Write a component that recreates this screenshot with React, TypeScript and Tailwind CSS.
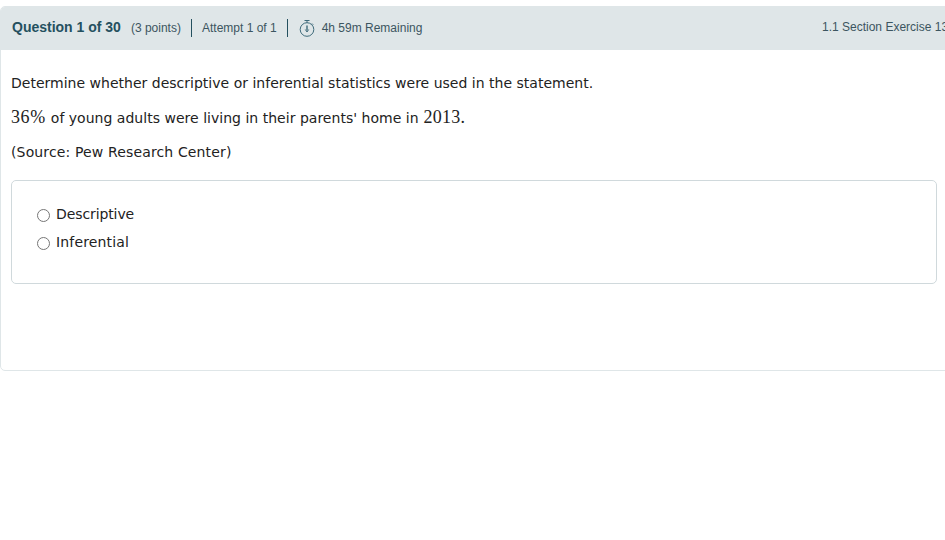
export default function App() {
  return (
    <div className="bg-white w-[945px] h-[540px] overflow-hidden pt-[6px]">
      <div className="w-[960px] h-[365px] border border-[#dfe6e8] rounded-[5px] overflow-hidden">
        <div className="h-[44px] -mt-px -mx-px bg-[#dfe6e8] flex items-center justify-between pl-[12px] text-[#2a4652] font-['Liberation_Sans',sans-serif]">
          <div className="flex items-center">
            <span className="text-[14px] font-bold text-[#24505f] -mt-[2px]">Question 1 of 30</span>
            <span className="text-[12px] ml-[10px] text-[#3c5560]">(3 points)</span>
            <span className="w-px h-[18px] bg-[#24505f] ml-[10px]"></span>
            <span className="text-[12px] ml-[10px] text-[#3c5560]">Attempt 1 of 1</span>
            <span className="w-px h-[18px] bg-[#24505f] ml-[10px]"></span>
            <svg className="ml-[11px] text-[#3e6a7a]" width="16" height="18" viewBox="0 0 16 18" fill="none" stroke="currentColor" strokeWidth="1">
              <circle cx="8" cy="10.5" r="6.8" />
              <path d="M5.5 1.5h5M8 1.5V3.7M13 4.5l1.2 1.2" />
              <path d="M8 6.5v5" strokeWidth="1.4" />
              <path d="M6.3 10.5 8 13l1.7-2.5" />
            </svg>
            <span className="text-[12px] ml-[7px] text-[#3c5560]">4h 59m Remaining</span>
          </div>
          <span className="text-[12px] whitespace-nowrap w-[138px] text-[#3c5560] -mt-[2px]">1.1 Section Exercise 13</span>
        </div>
        <div className="pl-[10px] pr-[22px] text-[#222] text-[14px] font-['DejaVu_Sans',sans-serif]">
          <p className="mt-[24px] leading-[18px] tracking-[0.01px]">Determine whether descriptive or inferential statistics were used in the statement.</p>
          <div className="mt-[16px] h-[18px] leading-[18px] flex items-baseline gap-[5px] whitespace-pre">
            <div className="font-['Liberation_Serif',serif] text-[18px] tracking-[0.6px]">36%</div>
            <div className="tracking-[0.02px]">of young adults were living in their parents&#39; home in</div>
            <div className="font-['Liberation_Serif',serif] text-[18px] tracking-[0.2px]">2013.</div>
          </div>
          <p className="mt-[17px] leading-[18px] tracking-[0.14px]">(Source: Pew Research Center)</p>
          <div className="mt-[19px] h-[104px] border border-[#d0d9dc] rounded-[5px] pl-[25px] pt-[24px]">
            <label className="flex items-center h-[18px]">
              <span className="w-[13px] h-[13px] rounded-full border border-[#767676] bg-white mt-[2px]"></span>
              <span className="ml-[6px] tracking-[-0.1px]">Descriptive</span>
            </label>
            <label className="flex items-center h-[18px] mt-[10px]">
              <span className="w-[13px] h-[13px] rounded-full border border-[#767676] bg-white mt-[2px]"></span>
              <span className="ml-[6px] tracking-[0.15px]">Inferential</span>
            </label>
          </div>
        </div>
      </div>
    </div>
  );
}
